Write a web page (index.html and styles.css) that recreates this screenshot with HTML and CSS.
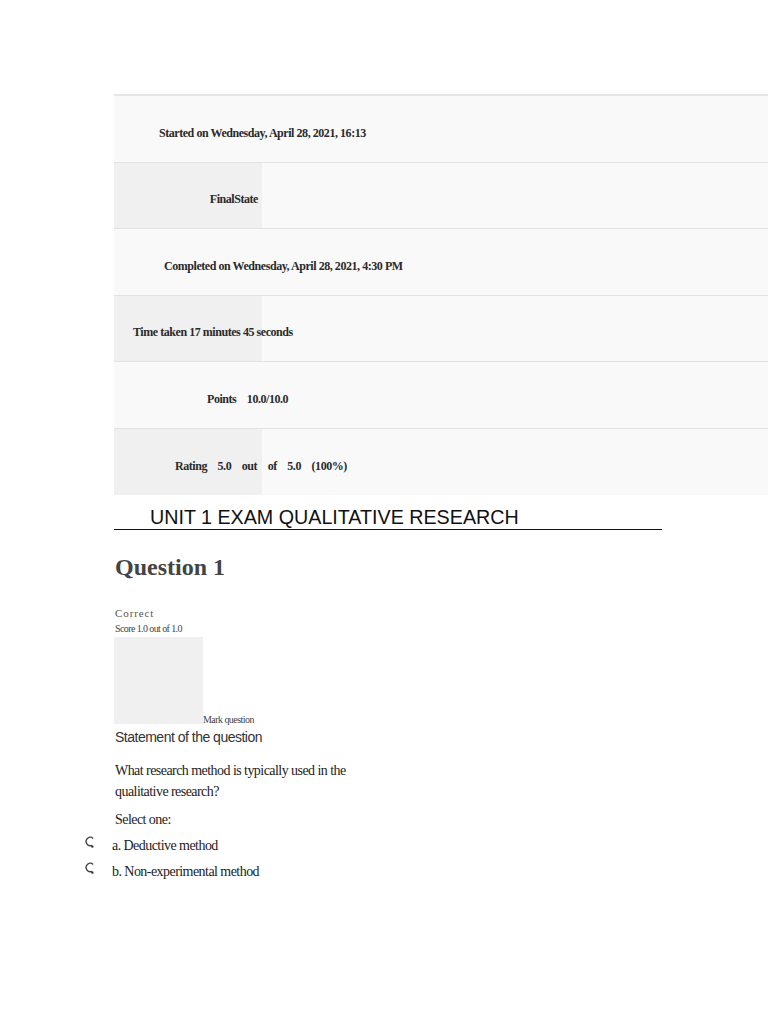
FILE: index.html
```html
<!DOCTYPE html>
<html>
<head>
<meta charset="utf-8">
<link rel="stylesheet" href="styles.css">
</head>
<body>
<div class="page">
  <div class="summary">
    <div class="row"><div class="cell-l"></div><span class="txt ind-started">Started on Wednesday, April 28, 2021, 16:13</span></div>
    <div class="row alt"><div class="cell-l"><span class="txt right">FinalState</span></div></div>
    <div class="row"><div class="cell-l"></div><span class="txt ind-completed">Completed on Wednesday, April 28, 2021, 4:30 PM</span></div>
    <div class="row alt"><div class="cell-l"></div><span class="txt ind-time">Time taken 17 minutes 45 seconds</span></div>
    <div class="row"><div class="cell-l"></div><span class="txt ind-points">Points <span class="gap">10.0/10.0</span></span></div>
    <div class="row alt"><div class="cell-l"></div><span class="txt ind-rating">Rating <span class="gap">5.0</span> <span class="gap">out</span> <span class="gap">of</span> <span class="gap">5.0</span> <span class="gap">(100%)</span></span></div>
  </div>

  <div class="unit">
    <h2 class="unit-title">UNIT 1 EXAM QUALITATIVE RESEARCH</h2>
  </div>

  <div class="question">
    <h3 class="q-title">Question 1</h3>
    <div class="state">Correct</div>
    <div class="grade">Score 1.0 out of 1.0</div>
    <div class="flag-row"><div class="flag-box"></div><span class="flag-text">Mark question</span></div>
    <div class="stmt">Statement of the question</div>
    <p class="qtext">What research method is typically used in the<br>qualitative research?</p>
    <div class="prompt">Select one:</div>
    <div class="option">
      <svg class="radio" viewBox="0 0 12 12" width="12" height="12"><path d="M9.2 2.4 A4.2 4.2 0 1 0 8.2 9.3" fill="none" stroke="#444" stroke-width="1.4"/><rect x="7.4" y="9.6" width="2" height="2" fill="#222"/></svg>
      <span class="opt-label">a. Deductive method</span>
    </div>
    <div class="option">
      <svg class="radio" viewBox="0 0 12 12" width="12" height="12"><path d="M9.2 2.4 A4.2 4.2 0 1 0 8.2 9.3" fill="none" stroke="#444" stroke-width="1.4"/><rect x="7.4" y="9.6" width="2" height="2" fill="#222"/></svg>
      <span class="opt-label">b. Non-experimental method</span>
    </div>
  </div>
</div>
</body>
</html>
```

FILE: styles.css
```css
html, body {
  margin: 0;
  padding: 0;
  background: #ffffff;
}

.page {
  padding-top: 94px;
}

.summary {
  margin-left: 114px;
  background: #f9f9f9;
  border-top: 2px solid #e6e6e6;
}

.row {
  position: relative;
  height: 66.5px;
  display: flex;
  align-items: center;
  border-bottom: 1px solid #e2e2e2;
  box-sizing: border-box;
}

.row:last-child {
  border-bottom: none;
}

.cell-l {
  width: 148px;
  height: 100%;
  flex: none;
  display: flex;
  align-items: center;
  justify-content: flex-end;
  box-sizing: border-box;
  padding-right: 4px;
  padding-top: 8px;
}

.row.alt .cell-l {
  background: #f0f0f0;
}

.txt {
  font-family: "Liberation Serif", "Times New Roman", serif;
  font-weight: bold;
  font-size: 12px;
  letter-spacing: -0.45px;
  color: #2a2a2a;
  white-space: nowrap;
}

.row > .txt {
  position: absolute;
  top: calc(50% + 4px);
  transform: translateY(-50%);
}

.ind-started { left: 45px; }
.ind-completed { left: 50px; }
.ind-time { left: 19px; }
.ind-points { left: 93px; }
.ind-rating { left: 61px; }

.gap {
  margin-left: 8px;
}

.unit {
  margin-left: 114px;
  width: 548px;
  border-bottom: 1px solid #111;
  padding-top: 11px;
}

.unit-title {
  margin: 0;
  padding-left: 36px;
  font-family: "Liberation Sans", Arial, sans-serif;
  font-weight: normal;
  font-size: 19.7px;
  line-height: 23px;
  color: #111;
}

.question {
  margin-left: 115px;
  font-family: "Liberation Serif", "Times New Roman", serif;
}

.q-title {
  margin: 23px 0 0 0;
  font-size: 24px;
  line-height: 28px;
  font-weight: bold;
  color: #444;
}

.state {
  margin-top: 24px;
  font-size: 11px;
  line-height: 16px;
  letter-spacing: 0.9px;
  color: #555;
}

.grade {
  font-size: 10px;
  line-height: 16px;
  letter-spacing: -0.6px;
  color: #444;
}

.flag-row {
  display: flex;
  align-items: flex-end;
  margin-left: -1px;
}

.flag-box {
  width: 89px;
  height: 87px;
  background: #f0f0f0;
}

.flag-text {
  font-size: 10px;
  line-height: 10px;
  letter-spacing: -0.55px;
  color: #444;
  margin-bottom: -1px;
}

.stmt {
  margin-top: 5px;
  font-family: "Liberation Sans", Arial, sans-serif;
  font-size: 14px;
  line-height: 17px;
  letter-spacing: -0.5px;
  color: #333;
}

.qtext {
  margin: 14px 0 0 0;
  font-size: 14px;
  line-height: 21px;
  letter-spacing: -0.55px;
  color: #222;
}

.prompt {
  margin-top: 8px;
  font-size: 14px;
  line-height: 20px;
  letter-spacing: -0.55px;
  color: #222;
}

.option {
  position: relative;
  display: flex;
  align-items: center;
  margin-top: 6px;
  margin-left: -3px;
  height: 20px;
}

.radio {
  position: absolute;
  left: -28px;
  top: 0;
}

.opt-label {
  font-size: 14px;
  line-height: 20px;
  letter-spacing: -0.55px;
  color: #222;
}
```
